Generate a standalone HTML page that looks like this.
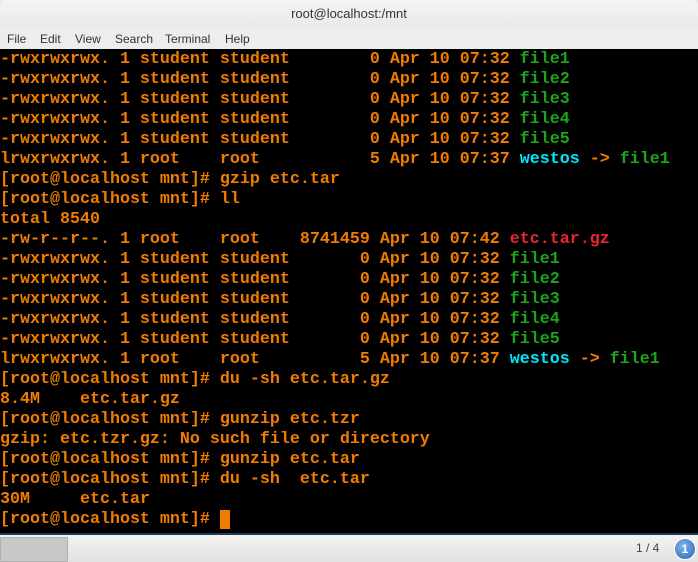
<!DOCTYPE html>
<html><head><style>
html,body{margin:0;padding:0;width:698px;height:562px;overflow:hidden;background:#e8e8e7;font-family:"Liberation Sans",sans-serif}
.title{position:absolute;left:0;top:0;width:698px;height:28px;background:linear-gradient(#f4f4f3,#e9e9e8);border-bottom:1px solid #d8d8d8;text-align:center;font-size:13px;line-height:28px;color:#2e3436;border-radius:5px 5px 0 0}
.menu{position:absolute;left:0;top:28px;width:698px;height:21px;background:#ededec;font-size:12px;color:#2e3436}
.menu span{position:absolute;top:4px}
.term{position:absolute;left:0;top:49px;width:698px;height:484px;background:#000;border-bottom:2px solid #223a5a;overflow:hidden}
pre{margin:0;position:absolute;left:0;top:1px;font-family:"Liberation Mono",monospace;font-weight:bold;font-size:16.67px;line-height:20px;color:#f07c00}
.g{color:#1aa51a}.c{color:#00e6ff}.r{color:#e8262c}
.cur{background:#f07c00}
.bot{position:absolute;left:0;top:535px;width:698px;height:27px;background:linear-gradient(#f3f3f2,#e2e2e1)}
.tab{position:absolute;left:0;top:2px;width:66px;height:23px;background:#c8c8c8;border:1px solid #b0b0b0}
.pg{position:absolute;left:636px;top:6px;font-size:12px;color:#444}
.badge{position:absolute;left:674px;top:3px;width:20px;height:20px;border-radius:50%;background:radial-gradient(circle at 40% 35%,#7fb2e8,#2a64b8);color:#fff;font-size:12px;text-align:center;line-height:20px;font-weight:bold;border:1px solid #fff}
</style></head><body>
<div class="title">root@localhost:/mnt</div>
<div class="menu"><span style="left:7px">File</span><span style="left:40px">Edit</span><span style="left:75px">View</span><span style="left:115px">Search</span><span style="left:165px">Terminal</span><span style="left:225px">Help</span></div>
<div class="term"><pre>-rwxrwxrwx. 1 student student        0 Apr 10 07:32 <span class="g">file1</span>
-rwxrwxrwx. 1 student student        0 Apr 10 07:32 <span class="g">file2</span>
-rwxrwxrwx. 1 student student        0 Apr 10 07:32 <span class="g">file3</span>
-rwxrwxrwx. 1 student student        0 Apr 10 07:32 <span class="g">file4</span>
-rwxrwxrwx. 1 student student        0 Apr 10 07:32 <span class="g">file5</span>
lrwxrwxrwx. 1 root    root           5 Apr 10 07:37 <span class="c">westos</span> -&gt; <span class="g">file1</span>
[root@localhost mnt]# gzip etc.tar
[root@localhost mnt]# ll
total 8540
-rw-r--r--. 1 root    root    8741459 Apr 10 07:42 <span class="r">etc.tar.gz</span>
-rwxrwxrwx. 1 student student       0 Apr 10 07:32 <span class="g">file1</span>
-rwxrwxrwx. 1 student student       0 Apr 10 07:32 <span class="g">file2</span>
-rwxrwxrwx. 1 student student       0 Apr 10 07:32 <span class="g">file3</span>
-rwxrwxrwx. 1 student student       0 Apr 10 07:32 <span class="g">file4</span>
-rwxrwxrwx. 1 student student       0 Apr 10 07:32 <span class="g">file5</span>
lrwxrwxrwx. 1 root    root          5 Apr 10 07:37 <span class="c">westos</span> -&gt; <span class="g">file1</span>
[root@localhost mnt]# du -sh etc.tar.gz
8.4M	etc.tar.gz
[root@localhost mnt]# gunzip etc.tzr
gzip: etc.tzr.gz: No such file or directory
[root@localhost mnt]# gunzip etc.tar
[root@localhost mnt]# du -sh  etc.tar
30M	etc.tar
[root@localhost mnt]# <span class="cur"> </span></pre></div>
<div class="bot"><div class="tab"></div><div class="pg">1 / 4</div><div class="badge">1</div></div>
</body></html>
